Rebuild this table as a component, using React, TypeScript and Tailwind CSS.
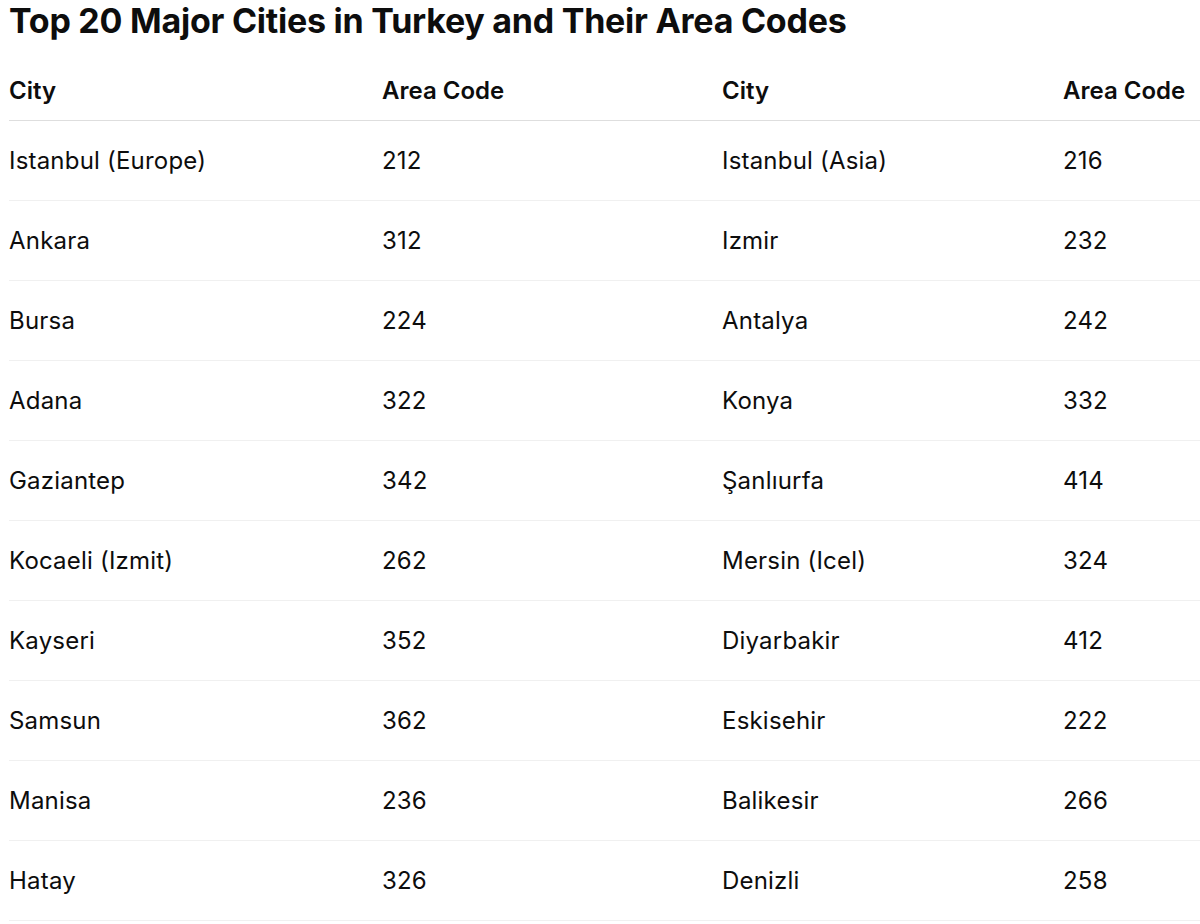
const rows: [string, string, string, string][] = [
  ["Istanbul (Europe)", "212", "Istanbul (Asia)", "216"],
  ["Ankara", "312", "Izmir", "232"],
  ["Bursa", "224", "Antalya", "242"],
  ["Adana", "322", "Konya", "332"],
  ["Gaziantep", "342", "Şanlıurfa", "414"],
  ["Kocaeli (Izmit)", "262", "Mersin (Icel)", "324"],
  ["Kayseri", "352", "Diyarbakir", "412"],
  ["Samsun", "362", "Eskisehir", "222"],
  ["Manisa", "236", "Balikesir", "266"],
  ["Hatay", "326", "Denizli", "258"],
];

export default function App() {
  return (
    <div
      className="h-[924px] w-[1200px] overflow-hidden bg-white pl-[9px] text-[#0d0d0d]"
      style={{ fontFamily: "Inter, 'Noto Sans', sans-serif" }}
    >
      <h1 className="pt-[1px] text-[34px] font-bold leading-[40px] tracking-[-0.25px]">
        Top 20 Major Cities in Turkey and Their Area Codes
      </h1>
      <div className="mt-[35px] grid grid-cols-[373px_340px_341px_1fr] border-b border-[#dedede] pb-[14px] text-[24px] font-semibold leading-[30px]">
        <div>City</div>
        <div>Area Code</div>
        <div>City</div>
        <div>Area Code</div>
      </div>
      {rows.map((r, i) => (
        <div
          key={i}
          className="grid h-[80px] grid-cols-[373px_340px_341px_1fr] items-center border-b border-[#f0f0f0] text-[24px] leading-[30px] tracking-[0.2px]"
        >
          <div>{r[0]}</div>
          <div>{r[1]}</div>
          <div>{r[2]}</div>
          <div>{r[3]}</div>
        </div>
      ))}
    </div>
  );
}
